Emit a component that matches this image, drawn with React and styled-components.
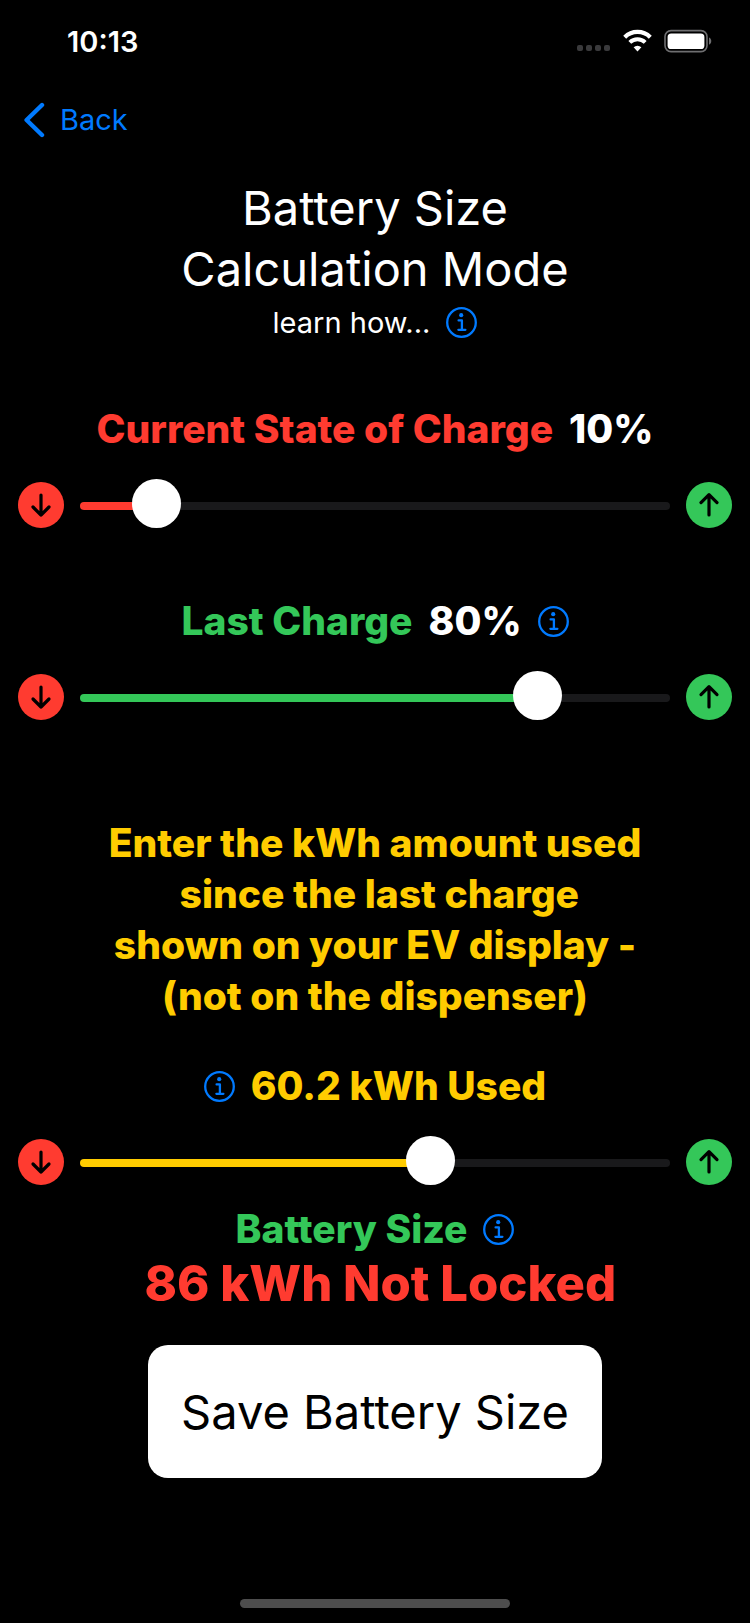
import React, { useState } from "react";
import styled, { createGlobalStyle } from "styled-components";

const colors = {
  red: "#ff3b30",
  green: "#34c759",
  yellow: "#ffcc00",
  blue: "#007aff",
  track: "#19191b",
};

const GlobalStyle = createGlobalStyle`
  * {
    box-sizing: border-box;
  }

  body {
    margin: 0;
    background: #000;
    color: #fff;
    font-family: Inter, "Liberation Sans", sans-serif;
  }

  button {
    padding: 0;
    border: 0;
    background: none;
    font-family: inherit;
    cursor: pointer;
  }
`;

const ScreenStyles = styled.div`
  display: flex;
  flex-direction: column;
  min-height: 100vh;
  padding-bottom: 15px;
`;

const StatusBar = styled.header`
  display: flex;
  align-items: center;
  justify-content: space-between;
  height: 82px;
  padding: 0 38px 0 67px;
`;

const StatusTime = styled.time`
  font-size: 29px;
  font-weight: 600;
`;

const StatusIcons = styled.div`
  display: flex;
  align-items: center;
  gap: 12px;
`;

const NavBar = styled.nav`
  display: flex;
  align-items: center;
  height: 75px;
  padding: 0 24px;
`;

const BackLink = styled.a`
  display: flex;
  align-items: center;
  gap: 15px;
  color: ${colors.blue};
  font-size: 29px;
  text-decoration: none;
`;

const Content = styled.main`
  display: flex;
  flex-direction: column;
  padding: 20px 18px 0;
`;

const Title = styled.h1`
  margin: 0;
  font-size: 47px;
  font-weight: 400;
  line-height: 61px;
  text-align: center;
`;

const LearnRow = styled.div`
  display: flex;
  align-items: center;
  justify-content: center;
  gap: 16px;
  height: 46px;
  font-size: 29px;
`;

const Section = styled.section`
  display: flex;
  flex-direction: column;
  gap: 25px;
  margin-top: ${(props) => props.$space}px;
`;

const HeadingRow = styled.div`
  display: flex;
  align-items: center;
  justify-content: center;
  gap: 16px;
  color: ${(props) => props.$color || "#fff"};
  font-size: 39px;
  font-weight: 800;
  line-height: 52px;
`;

const Value = styled.output`
  color: #fff;
`;

const InfoButton = styled.button`
  display: flex;
  color: ${colors.blue};
`;

const SliderRow = styled.div`
  display: flex;
  align-items: center;
  gap: 16px;
  height: 50px;
`;

const StepButton = styled.button`
  display: flex;
  flex-shrink: 0;
  width: 46px;
  height: 46px;
  border-radius: 50%;
  background: ${(props) => props.$color};
  color: #000;
`;

const Slider = styled.input`
  flex: 1;
  min-width: 0;
  height: 50px;
  margin: 0;
  padding-top: 2px;
  background: none;
  appearance: none;
  cursor: pointer;

  &::-webkit-slider-runnable-track {
    height: 8px;
    border-radius: 4px;
    background: linear-gradient(
      to right,
      ${(props) => props.$color} var(--fill),
      ${colors.track} var(--fill)
    );
  }

  &::-webkit-slider-thumb {
    width: 49px;
    height: 49px;
    margin-top: -23px;
    border-radius: 50%;
    background: #fff;
    appearance: none;
  }
`;

const Hint = styled.p`
  margin: 95px 0 14px;
  color: ${colors.yellow};
  font-size: 39px;
  font-weight: 800;
  line-height: 51px;
  text-align: center;
`;

const ResultBlock = styled.section`
  display: flex;
  flex-direction: column;
  margin-top: 16px;
`;

const Result = styled.output`
  color: ${colors.red};
  font-size: 49px;
  font-weight: 800;
  line-height: 58px;
  text-align: center;
`;

const SaveButton = styled.button`
  align-self: center;
  margin: 32px 0;
  padding: 36px 33px;
  border-radius: 20px;
  background: #fff;
  color: #000;
  font-size: 47px;
  line-height: 61px;
`;

const HomeIndicator = styled.div`
  align-self: center;
  width: 36%;
  height: 9px;
  margin-top: auto;
  border-radius: 5px;
  background: #4d4d4d;
`;

const SignalIcon = () => (
  <svg width="34" height="24" viewBox="0 0 34 24" fill="#3a3a3c">
    <rect x="0" y="16" width="6" height="6" rx="2" />
    <rect x="9" y="16" width="6" height="6" rx="2" />
    <rect x="18" y="16" width="6" height="6" rx="2" />
    <rect x="27" y="16" width="6" height="6" rx="2" />
  </svg>
);

const WifiIcon = () => (
  <svg width="29" height="24" viewBox="0 0 29 24" fill="none" stroke="#fff">
    <path d="M1.7 8.2a18.2 18.2 0 0 1 25.6 0" strokeWidth="4.2" />
    <path d="M6.8 13.4a11 11 0 0 1 15.4 0" strokeWidth="4" />
    <path
      d="M10.6 18.3a5.8 5.8 0 0 1 7.8 0L14.5 22.4z"
      fill="#fff"
      stroke="none"
    />
  </svg>
);

const BatteryIcon = () => (
  <svg width="48" height="24" viewBox="0 0 48 24" fill="none">
    <rect
      x="1"
      y="1.6"
      width="42"
      height="21"
      rx="6"
      stroke="#6e6e70"
      strokeWidth="1.6"
    />
    <rect x="3.6" y="4.4" width="36.8" height="15.6" rx="3.6" fill="#fff" />
    <path d="M45 8.6c3 1.2 3 6 0 7.2z" fill="#6e6e70" />
  </svg>
);

const ChevronIcon = () => (
  <svg
    width="21"
    height="36"
    viewBox="0 0 21 36"
    fill="none"
    stroke="currentColor"
    strokeWidth="4.4"
    strokeLinecap="round"
    strokeLinejoin="round"
  >
    <path d="M18 3 2.6 18 18 33" />
  </svg>
);

const InfoIcon = () => (
  <svg
    width="31"
    height="31"
    viewBox="0 0 31 31"
    fill="none"
    stroke="currentColor"
    strokeWidth="2.3"
    strokeLinecap="round"
    strokeLinejoin="round"
  >
    <circle cx="15.5" cy="15.5" r="14.3" />
    <circle cx="15.2" cy="8.2" r="2.1" fill="currentColor" stroke="none" />
    <path d="M12.6 13.4h3.3v9.3M12.4 22.8h7" />
  </svg>
);

const ArrowIcon = ({ up }) => (
  <svg
    width="46"
    height="46"
    viewBox="0 0 46 46"
    fill="none"
    stroke="currentColor"
    strokeWidth="3.2"
    strokeLinecap="round"
    strokeLinejoin="round"
  >
    {up ? (
      <path d="M23 33V13M15 20.6l8-8 8 8" />
    ) : (
      <path d="M23 13v20M15 25l8 8 8-8" />
    )}
  </svg>
);

const Info = ({ label }) => (
  <InfoButton type="button" aria-label={label}>
    <InfoIcon />
  </InfoButton>
);

// The centre of the thumb stops half its width short of both track ends.
const getFill = (value) => `calc(${value}% + ${24.5 - value * 0.49}px)`;

const StepSlider = ({ id, color, value, step, onChange }) => {
  const change = (next) =>
    onChange(Math.min(100, Math.max(0, Number(next.toFixed(1)))));
  return (
    <SliderRow>
      <StepButton
        type="button"
        aria-label="Decrease"
        $color={colors.red}
        onClick={() => change(value - step)}
      >
        <ArrowIcon />
      </StepButton>
      <Slider
        id={id}
        type="range"
        min="0"
        max="100"
        step="0.1"
        value={value}
        $color={color}
        style={{ "--fill": getFill(value) }}
        onChange={(e) => change(Number(e.target.value))}
      />
      <StepButton
        type="button"
        aria-label="Increase"
        $color={colors.green}
        onClick={() => change(value + step)}
      >
        <ArrowIcon up />
      </StepButton>
    </SliderRow>
  );
};

const App = () => {
  const [current, setCurrent] = useState(9.6);
  const [last, setLast] = useState(80);
  const [used, setUsed] = useState(60.2);
  const charged = last - current;
  const size = charged > 0 ? Math.round((used / charged) * 100) : 0;

  return (
    <ScreenStyles>
      <GlobalStyle />
      <StatusBar>
        <StatusTime>10:13</StatusTime>
        <StatusIcons>
          <SignalIcon />
          <WifiIcon />
          <BatteryIcon />
        </StatusIcons>
      </StatusBar>
      <NavBar>
        <BackLink href="#">
          <ChevronIcon />
          Back
        </BackLink>
      </NavBar>
      <Content>
        <Title>
          Battery Size
          <br />
          Calculation Mode
        </Title>
        <LearnRow>
          learn how...
          <Info label="Learn how" />
        </LearnRow>
        <Section $space={58}>
          <HeadingRow $color={colors.red}>
            <label htmlFor="current">Current State of Charge</label>
            <Value>{current.toFixed(0)}%</Value>
          </HeadingRow>
          <StepSlider
            id="current"
            color={colors.red}
            value={current}
            step={1}
            onChange={setCurrent}
          />
        </Section>
        <Section $space={65}>
          <HeadingRow $color={colors.green}>
            <label htmlFor="last">Last Charge</label>
            <Value>{last.toFixed(0)}%</Value>
            <Info label="About last charge" />
          </HeadingRow>
          <StepSlider
            id="last"
            color={colors.green}
            value={last}
            step={1}
            onChange={setLast}
          />
        </Section>
        <Hint>
          Enter the kWh amount used
          <br />
          &nbsp;since the last charge
          <br />
          shown on your EV display -
          <br />
          (not on the dispenser)
        </Hint>
        <Section $space={25}>
          <HeadingRow $color={colors.yellow}>
            <Info label="About kWh used" />
            <label htmlFor="used">{used.toFixed(1)} kWh Used</label>
          </HeadingRow>
          <StepSlider
            id="used"
            color={colors.yellow}
            value={used}
            step={0.1}
            onChange={setUsed}
          />
        </Section>
        <ResultBlock>
          <HeadingRow $color={colors.green}>
            Battery Size
            <Info label="About battery size" />
          </HeadingRow>
          <Result>&nbsp;{size} kWh Not Locked</Result>
        </ResultBlock>
        <SaveButton type="button">Save Battery Size</SaveButton>
      </Content>
      <HomeIndicator />
    </ScreenStyles>
  );
};

export default App;
